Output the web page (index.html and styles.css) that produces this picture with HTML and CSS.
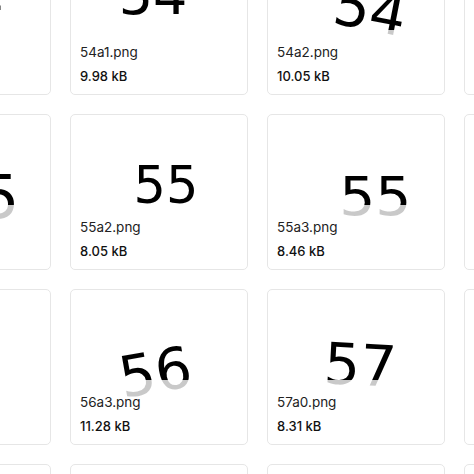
FILE: index.html
```html
<!DOCTYPE html>
<html lang="en">
<head>
  <meta charset="UTF-8">
  <title>Digit Dataset Browser</title>
  <link rel="stylesheet" href="styles.css">
</head>
<body>
  <div class="gallery">
    <!-- row 54 -->
    <div class="card">
      <div class="preview"><span class="digits" style="font-size:56px; transform: translate(6px, 15px)">54</span></div>
      <div class="info"><div class="name">54a0.png</div><div class="size">9.12 kB</div></div>
    </div>
    <div class="card">
      <div class="preview"><span class="digits" style="font-size:54px; transform: translate(-6px, 11px)">54</span></div>
      <div class="info"><div class="name">54a1.png</div><div class="size">9.98 kB</div></div>
    </div>
    <div class="card">
      <div class="preview"><span class="digits" style="font-size:57px; transform: translate(14px, 25px) rotate(11deg)">54</span></div>
      <div class="info"><div class="name">54a2.png</div><div class="size">10.05 kB</div></div>
    </div>
    <div class="card">
      <div class="preview"><span class="digits" style="font-size:54px; transform: translate(10px, 14px)">54</span></div>
      <div class="info"><div class="name">54a3.png</div><div class="size">8.77 kB</div></div>
    </div>
    <div class="card">
      <div class="preview"><span class="digits" style="font-size:54px">55</span></div>
      <div class="info"><div class="name">55a0.png</div><div class="size">8.12 kB</div></div>
    </div>

    <!-- row 55 -->
    <div class="card">
      <div class="preview"><span class="digits" style="font-size:60px; transform: translate(19px, 37px)">55</span></div>
      <div class="info"><div class="name">55a1.png</div><div class="size">9.41 kB</div></div>
    </div>
    <div class="card">
      <div class="preview"><span class="digits" style="font-size:51px; transform: translate(7px, 25px)">55</span></div>
      <div class="info"><div class="name">55a2.png</div><div class="size">8.05 kB</div></div>
    </div>
    <div class="card">
      <div class="preview"><span class="digits" style="font-size:54px; transform: translate(19px, 37px) scaleX(1.05)">55</span></div>
      <div class="info"><div class="name">55a3.png</div><div class="size">8.46 kB</div></div>
    </div>
    <div class="card">
      <div class="preview"><span class="digits" style="font-size:54px; transform: translate(24px, 20px)">56</span></div>
      <div class="info"><div class="name">56a0.png</div><div class="size">9.63 kB</div></div>
    </div>
    <div class="card">
      <div class="preview"><span class="digits" style="font-size:54px">56</span></div>
      <div class="info"><div class="name">56a1.png</div><div class="size">10.20 kB</div></div>
    </div>

    <!-- row 56 -->
    <div class="card">
      <div class="preview"><span class="digits" style="font-size:54px; transform: translate(-20px, 10px)">56</span></div>
      <div class="info"><div class="name">56a2.png</div><div class="size">9.87 kB</div></div>
    </div>
    <div class="card">
      <div class="preview"><span class="digits" style="font-size:57px; transform: translate(-4px, 37px) rotate(-10deg)">56</span></div>
      <div class="info"><div class="name">56a3.png</div><div class="size">11.28 kB</div></div>
    </div>
    <div class="card">
      <div class="preview"><span class="digits" style="font-size:57px; transform: translate(4px, 30px) rotate(3deg)">57</span></div>
      <div class="info"><div class="name">57a0.png</div><div class="size">8.31 kB</div></div>
    </div>
    <div class="card">
      <div class="preview"><span class="digits" style="font-size:54px; transform: translate(20px, 10px)">57</span></div>
      <div class="info"><div class="name">57a1.png</div><div class="size">8.94 kB</div></div>
    </div>
    <div class="card">
      <div class="preview"><span class="digits" style="font-size:54px">57</span></div>
      <div class="info"><div class="name">57a2.png</div><div class="size">9.06 kB</div></div>
    </div>

    <!-- row 57 / 58 -->
    <div class="card">
      <div class="preview"><span class="digits" style="font-size:54px">57</span></div>
      <div class="info"><div class="name">57a3.png</div><div class="size">8.58 kB</div></div>
    </div>
    <div class="card">
      <div class="preview"><span class="digits" style="font-size:54px">58</span></div>
      <div class="info"><div class="name">58a0.png</div><div class="size">9.33 kB</div></div>
    </div>
    <div class="card">
      <div class="preview"><span class="digits" style="font-size:54px">58</span></div>
      <div class="info"><div class="name">58a1.png</div><div class="size">10.11 kB</div></div>
    </div>
    <div class="card">
      <div class="preview"><span class="digits" style="font-size:54px">58</span></div>
      <div class="info"><div class="name">58a2.png</div><div class="size">9.74 kB</div></div>
    </div>
    <div class="card">
      <div class="preview"><span class="digits" style="font-size:54px">58</span></div>
      <div class="info"><div class="name">58a3.png</div><div class="size">8.89 kB</div></div>
    </div>
  </div>
</body>
</html>
```

FILE: styles.css
```css
body {
  margin: 0;
  background: #fff;
  font-family: Inter, 'Liberation Sans', sans-serif;
  overflow: hidden;
}

/* page is scrolled: first column and first row are partly out of view */
.gallery {
  display: grid;
  grid-template-columns: repeat(5, 178px);
  gap: 19px;
  margin: -61px 0 0 -127px;
}

.card {
  background: #fff;
  border: 1px solid #e6e6e6;
  border-radius: 5px;
}

.preview {
  height: 90px;
  display: flex;
  align-items: center;
  justify-content: center;
}

.digits {
  display: inline-block;
  font-family: 'DejaVu Sans', sans-serif;
  line-height: 1;
  color: #000;
  white-space: nowrap;
}

/* sits over the part of the picture that runs into the caption */
.info {
  position: relative;
  padding: 12px 10px 8px 9px;
  background: rgba(255, 255, 255, 0.79);
  border-radius: 0 0 5px 5px;
}

.name {
  font-size: 13.5px;
  line-height: 20px;
  color: #222;
}

.size {
  margin-top: 4px;
  font-size: 13px;
  line-height: 20px;
  font-weight: 500;
  color: #111;
}
```
